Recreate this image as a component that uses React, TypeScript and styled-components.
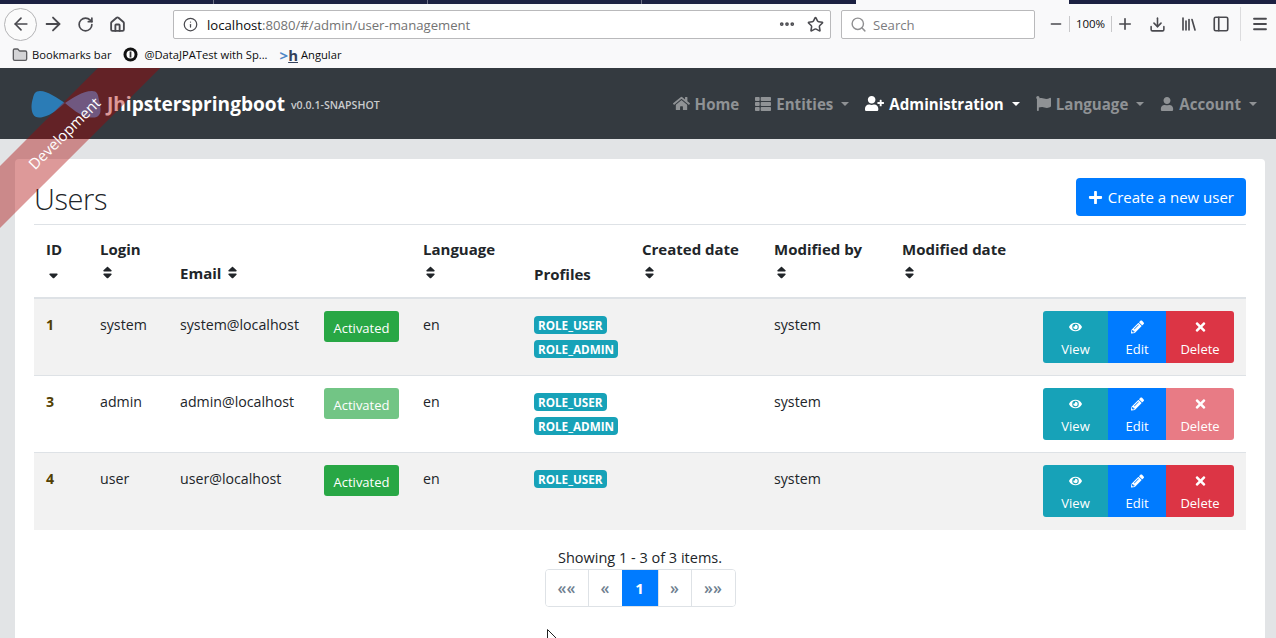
import React from "react"
import styled, { createGlobalStyle } from "styled-components"
import { FaEye, FaFlag, FaHome, FaPencilAlt, FaPlus, FaSort, FaSortDown, FaThList, FaTimes, FaUser, FaUserPlus } from "react-icons/fa"
import { ArrowLeft, ArrowRight, Download, Ellipsis, Folder, Home, Info, Library, Menu, Minus, PanelLeft, Plus, RotateCw, Search, Star } from "lucide-react"

const FONT = `"Open Sans", "Noto Sans", "Liberation Sans", sans-serif`

const GlobalStyle = createGlobalStyle`
  html, body {
    margin: 0;
    height: 638px;
    overflow: hidden;
    font-family: ${FONT};
    font-size: 14px;
    color: #212529;
    background: #e2e4e6;
  }
  * { box-sizing: border-box; }
`

const SPage = styled.div`
  position: relative;
  width: 1276px;
  height: 638px;
  overflow: hidden;
`

/* browser chrome */
const SChrome = styled.div`
  background: #f9f9fa;
  height: 68px;
`

const STabStrip = styled.div`
  display: grid;
  grid-template-columns: 214px 214px 214px 214px 213px 1fr;
  height: 4px;
`

const STab = styled.div<{ $active?: boolean; $last?: boolean }>`
  background: ${({ $active }) => ($active ? "#f9f9fa" : "#1c2142")};
  border-right: ${({ $active, $last }) => ($active || $last ? "none" : "1px solid #6d7085")};
`

const SToolbar = styled.div`
  display: flex;
  align-items: center;
  height: 40px;
  padding-left: 4px;
  color: #4a4a4f;
`

const SBackButton = styled.div`
  display: flex;
  align-items: center;
  justify-content: center;
  flex: none;
  width: 33px;
  height: 33px;
  border: 1px solid #b4b4b6;
  border-radius: 50%;
  background: #fbfbfb;
`

const SToolButton = styled.div<{ $width?: number }>`
  display: flex;
  align-items: center;
  justify-content: center;
  flex: none;
  width: ${({ $width }) => $width || 32}px;
`

const SDownloadButton = styled(SToolButton)`
  margin-left: 3px;
`

const SUrlBar = styled.div`
  display: flex;
  align-items: center;
  flex: none;
  width: 658px;
  height: 29px;
  margin-left: 40px;
  padding: 0 6px 0 9px;
  background: #fff;
  border: 1px solid #b9b9bb;
  border-radius: 2px;
  font-size: 13.15px;
`

const SUrlText = styled.div`
  flex: 1;
  margin-left: 9px;
  padding-top: 1px;
  color: #737373;
`

const SUrlHost = styled.span`
  color: #0c0c0d;
`

const SUrlActions = styled.div`
  display: flex;
  align-items: center;
  gap: 11px;
`

const SSearchBar = styled.div`
  display: flex;
  align-items: center;
  gap: 6px;
  flex: none;
  width: 194px;
  height: 29px;
  margin-left: 10px;
  padding-left: 8px;
  background: #fff;
  border: 1px solid #b9b9bb;
  border-radius: 2px;
  color: #7c7c80;
  font-size: 13.15px;
`

const SSearchLabel = styled.span`
  padding-top: 1px;
`

const SZoomOut = styled(SToolButton)`
  width: 28px;
  margin-left: 7px;
  height: 16px;
  border-right: 1px solid #c8c8ca;
`

const SZoomLabel = styled.div`
  flex: none;
  width: 42px;
  height: 16px;
  border-right: 1px solid #c8c8ca;
  text-align: center;
  font-size: 11.5px;
  line-height: 16px;
  color: #0c0c0d;
`

const SDivider = styled.div`
  flex: none;
  width: 1px;
  height: 34px;
  margin: 0 3px;
  background: #dcdcde;
`

const SBookmarks = styled.div`
  display: flex;
  align-items: center;
  height: 24px;
  padding: 0 0 3px 12px;
  font-size: 11.2px;
  color: #0c0c0d;
`

const SBookmark = styled.div<{ $gap: number }>`
  display: flex;
  align-items: center;
  gap: ${({ $gap }) => $gap}px;
  margin-right: 12px;
`

const SHBadge = styled.span`
  font-weight: 700;
  font-size: 15px;
  line-height: 16px;
  color: #4f86c6;
`

const SHLetter = styled.span`
  color: #33415c;
  text-decoration: underline;
`

/* app navbar */
const SNavbar = styled.nav`
  display: flex;
  align-items: center;
  justify-content: space-between;
  height: 71px;
  padding: 0 19px 0 30px;
  background: #343a40;
`

const SBrand = styled.div`
  display: flex;
  align-items: center;
`

const SBrandName = styled.span`
  margin-left: 5px;
  font-size: 19.1px;
  font-weight: 700;
  color: #fff;
`

const SBrandVersion = styled.span`
  margin: 3px 0 0 6px;
  font-size: 10.6px;
  font-weight: 600;
  color: #c9cbcd;
`

const SNavList = styled.div`
  display: flex;
  align-items: center;
  gap: 16px;
`

const SNavItem = styled.div<{ $active?: boolean }>`
  display: flex;
  align-items: center;
  gap: 5px;
  font-size: 15.1px;
  font-weight: 700;
  color: ${({ $active }) => ($active ? "#fff" : "#8f9295")};
`

const SCaret = styled.span`
  width: 0;
  height: 0;
  margin-left: 3px;
  border-top: 4px solid currentColor;
  border-left: 4px solid transparent;
  border-right: 4px solid transparent;
`

/* ribbon over the corner */
const SRibbonClip = styled.div`
  position: absolute;
  top: 68px;
  left: 0;
  width: 240px;
  height: 240px;
  overflow: hidden;
  pointer-events: none;
`

const SRibbon = styled.div`
  position: absolute;
  top: 43px;
  left: -86px;
  width: 300px;
  height: 44px;
  background: rgba(170, 0, 0, 0.4);
  color: #fff;
  font-size: 15px;
  line-height: 44px;
  text-align: center;
  transform: rotate(-45deg);
`

/* users card */
const SMain = styled.main`
  padding: 20px 11px 0 15px;
`

const SCard = styled.div`
  height: 479px;
  padding: 19px 19px 0;
  background: #fff;
  border-radius: 4px 4px 0 0;
`

const SCardHeader = styled.div`
  display: flex;
  align-items: flex-start;
  justify-content: space-between;
  height: 47px;
  padding-bottom: 8px;
  border-bottom: 1px solid #dee2e6;
`

const SHeading = styled.h2`
  margin: 0;
  font-size: 29px;
  font-weight: 300;
  letter-spacing: -0.4px;
  line-height: 42px;
`

const SCreateButton = styled.button`
  display: flex;
  align-items: center;
  gap: 5px;
  height: 38px;
  padding: 0 12px;
  background: #007bff;
  color: #fff;
  border: 0;
  border-radius: 4px;
  font-family: inherit;
  font-size: 15px;
`

const STable = styled.table`
  width: 100%;
  table-layout: fixed;
  border-collapse: collapse;
`

const STh = styled.th`
  padding: 12px 12px 11px;
  border-bottom: 2px solid #dee2e6;
  vertical-align: bottom;
  text-align: left;
  font-size: 15px;
  font-weight: 700;
  line-height: 24px;
`

const SHeadLine = styled.span`
  display: block;
  white-space: nowrap;
`

const SSort = styled.span`
  font-size: 15px;
  vertical-align: -1px;
`

const STr = styled.tr<{ $striped?: boolean }>`
  background: ${({ $striped }) => ($striped ? "#f2f2f2" : "#fff")};
`

const STd = styled.td`
  padding: 12px;
  height: 77px;
  border-top: 1px solid #dee2e6;
  vertical-align: top;
  font-size: 14.2px;
  line-height: 28px;
  white-space: nowrap;
`

const SIdLink = styled.span`
  font-weight: 700;
  color: #533f03;
`

const SStatus = styled.div<{ $faded?: boolean }>`
  display: block;
  width: 75px;
  height: 31px;
  background: #28a745;
  border-radius: 3px;
  color: #fff;
  font-size: 13px;
  line-height: 35px;
  text-align: center;
  opacity: ${({ $faded }) => ($faded ? 0.65 : 1)};
`

const SProfiles = styled.div`
  display: flex;
  flex-direction: column;
  align-items: flex-start;
  gap: 6px;
  padding-top: 5px;
`

const SBadge = styled.span`
  padding: 0 4px;
  height: 18px;
  background: #17a2b8;
  border-radius: 4px;
  color: #fff;
  font-size: 11.7px;
  font-weight: 700;
  line-height: 18px;
`

const SActions = styled.div`
  display: flex;
  justify-content: flex-end;
`

const SActionButton = styled.div<{ $width: number; $bg: string; $faded?: boolean; $pos?: "first" | "last" }>`
  display: flex;
  flex: none;
  flex-direction: column;
  align-items: center;
  width: ${({ $width }) => $width}px;
  height: 52px;
  padding-top: 9px;
  background: ${({ $bg }) => $bg};
  color: #fff;
  font-size: 13px;
  line-height: 20px;
  opacity: ${({ $faded }) => ($faded ? 0.65 : 1)};
  border-radius: ${({ $pos }) => ($pos === "first" ? "3px 0 0 3px" : $pos === "last" ? "0 3px 3px 0" : "0")};
  svg {
    flex: none;
    height: 14px;
    margin-bottom: 5px;
  }
`

const SFooter = styled.div`
  display: flex;
  flex-direction: column;
  align-items: center;
  padding-top: 18px;
  font-size: 14.5px;
`

const SShowing = styled.div`
  line-height: 20px;
  margin-bottom: 1px;
`

const SPagination = styled.div`
  display: flex;
  height: 38px;
  border: 1px solid #dee2e6;
  border-radius: 4px;
  overflow: hidden;
`

const SPageItem = styled.div<{ $width: number; $active?: boolean }>`
  display: flex;
  align-items: center;
  justify-content: center;
  width: ${({ $width }) => $width}px;
  margin: ${({ $active }) => ($active ? "-1px 0" : "0")};
  background: ${({ $active }) => ($active ? "#007bff" : "#fff")};
  color: ${({ $active }) => ($active ? "#fff" : "#6f7f90")};
  font-size: ${({ $active }) => ($active ? "15px" : "16px")};
  font-weight: ${({ $active }) => ($active ? 700 : 600)};
  border-left: ${({ $active }) => ($active ? "none" : "1px solid #dee2e6")};
  &:first-child {
    border-left: none;
  }
`

const SCursor = styled.svg`
  position: absolute;
  top: 629px;
  left: 547px;
`

const users = [
  { id: 1, login: "system", email: "system@localhost", roles: ["ROLE_USER", "ROLE_ADMIN"], self: false },
  { id: 3, login: "admin", email: "admin@localhost", roles: ["ROLE_USER", "ROLE_ADMIN"], self: true },
  { id: 4, login: "user", email: "user@localhost", roles: ["ROLE_USER"], self: false },
]

const stacked = ["Login", "Language", "Created date", "Modified by", "Modified date"]

const BrowserChrome = () => (
  <SChrome>
    <STabStrip>
      <STab />
      <STab />
      <STab />
      <STab $last />
      <STab $active />
      <STab $last />
    </STabStrip>
    <SToolbar>
      <SBackButton><ArrowLeft size={20} /></SBackButton>
      <SToolButton><ArrowRight size={22} /></SToolButton>
      <SToolButton><RotateCw size={17} strokeWidth={2.4} /></SToolButton>
      <SToolButton><Home size={17} strokeWidth={2.6} /></SToolButton>
      <SUrlBar>
        <Info size={15} />
        <SUrlText><SUrlHost>localhost</SUrlHost>:8080/#/admin/user-management</SUrlText>
        <SUrlActions>
          <Ellipsis size={18} strokeWidth={3} />
          <Star size={17} strokeWidth={2.2} />
        </SUrlActions>
      </SUrlBar>
      <SSearchBar>
        <Search size={17} color="#8f8f91" />
        <SSearchLabel>Search</SSearchLabel>
      </SSearchBar>
      <SZoomOut><Minus size={16} strokeWidth={2.2} /></SZoomOut>
      <SZoomLabel>100%</SZoomLabel>
      <SToolButton $width={26}><Plus size={18} strokeWidth={2.2} /></SToolButton>
      <SDownloadButton><Download size={17} strokeWidth={2.2} /></SDownloadButton>
      <SToolButton><Library size={18} strokeWidth={2.2} /></SToolButton>
      <SToolButton><PanelLeft size={18} strokeWidth={2.2} /></SToolButton>
      <SDivider />
      <SToolButton><Menu size={18} strokeWidth={2.4} /></SToolButton>
    </SToolbar>
    <SBookmarks>
      <SBookmark $gap={4}><Folder size={16} fill="#d4d4d6" color="#5c5c5f" />Bookmarks bar</SBookmark>
      <SBookmark $gap={6}>
        <svg width="15" height="15" viewBox="0 0 15 15">
          <circle cx="7.5" cy="7.5" r="7" fill="#111" />
          <circle cx="7.5" cy="7.5" r="4" fill="#fff" />
          <rect x="6.6" y="4.5" width="1.8" height="6" fill="#333" />
        </svg>
        @DataJPATest with Sp...
      </SBookmark>
      <SBookmark $gap={3}><SHBadge>&gt;<SHLetter>h</SHLetter></SHBadge>Angular</SBookmark>
    </SBookmarks>
  </SChrome>
)

const Navbar = () => (
  <SNavbar>
    <SBrand>
      <svg width="72" height="32" viewBox="0 0 72 32">
        <path d="M35 15C43 10 52 3 62 3C67 3 68 6 69 12C71 20 71 25 69 27C67 30 63 30 58 29C49 27 41 20 35 15Z" fill="#4a93d6" />
        <path d="M35 15C27 10 18 3 10 3C5 3 4 6 3 10C1 16 1 22 3 26C5 30 9 30 13 29C22 27 29 20 35 15Z" fill="#2b7cb6" />
      </svg>
      <SBrandName>Jhipsterspringboot</SBrandName>
      <SBrandVersion>v0.0.1-SNAPSHOT</SBrandVersion>
    </SBrand>
    <SNavList>
      <SNavItem><FaHome size={17} />Home</SNavItem>
      <SNavItem><FaThList size={16} />Entities<SCaret /></SNavItem>
      <SNavItem $active><FaUserPlus size={19} />Administration<SCaret /></SNavItem>
      <SNavItem><FaFlag size={15} />Language<SCaret /></SNavItem>
      <SNavItem><FaUser size={14} />Account<SCaret /></SNavItem>
    </SNavList>
  </SNavbar>
)

const HeadCell = ({ label }: { label: string }) => (
  <STh>
    {stacked.includes(label) ? <SHeadLine>{label}</SHeadLine> : label + " "}
    {label !== "Profiles" && <SSort><FaSort /></SSort>}
  </STh>
)

const UserRow = ({ user, striped }: { user: (typeof users)[number]; striped: boolean }) => (
  <STr $striped={striped}>
    <STd><SIdLink>{user.id}</SIdLink></STd>
    <STd>{user.login}</STd>
    <STd>{user.email}</STd>
    <STd><SStatus $faded={user.self}>Activated</SStatus></STd>
    <STd>en</STd>
    <STd>
      <SProfiles>
        {user.roles.map((role) => <SBadge key={role}>{role}</SBadge>)}
      </SProfiles>
    </STd>
    <STd></STd>
    <STd>system</STd>
    <STd></STd>
    <STd>
      <SActions>
        <SActionButton $width={65} $bg="#17a2b8" $pos="first"><FaEye />View</SActionButton>
        <SActionButton $width={58} $bg="#007bff"><FaPencilAlt />Edit</SActionButton>
        <SActionButton $width={68} $bg="#dc3545" $pos="last" $faded={user.self}><FaTimes />Delete</SActionButton>
      </SActions>
    </STd>
  </STr>
)

const widths = [54, 80, 144, 99, 111, 108, 132, 128, 129, 227]

const App = () => (
  <SPage>
    <GlobalStyle />
    <BrowserChrome />
    <Navbar />
    <SMain>
      <SCard>
        <SCardHeader>
          <SHeading>Users</SHeading>
          <SCreateButton><FaPlus size={15} />Create a new user</SCreateButton>
        </SCardHeader>
        <STable>
          <colgroup>
            {widths.map((w, i) => <col key={i} width={w} />)}
          </colgroup>
          <thead>
            <tr>
              <STh><SHeadLine>ID</SHeadLine><SSort><FaSortDown /></SSort></STh>
              <HeadCell label="Login" />
              <HeadCell label="Email" />
              <STh></STh>
              <HeadCell label="Language" />
              <HeadCell label="Profiles" />
              <HeadCell label="Created date" />
              <HeadCell label="Modified by" />
              <HeadCell label="Modified date" />
              <STh></STh>
            </tr>
          </thead>
          <tbody>
            {users.map((user, i) => <UserRow key={user.id} user={user} striped={i % 2 === 0} />)}
          </tbody>
        </STable>
        <SFooter>
          <SShowing>Showing 1 - 3 of 3 items.</SShowing>
          <SPagination>
            <SPageItem $width={42}>««</SPageItem>
            <SPageItem $width={34}>«</SPageItem>
            <SPageItem $width={36} $active>1</SPageItem>
            <SPageItem $width={33}>»</SPageItem>
            <SPageItem $width={44}>»»</SPageItem>
          </SPagination>
        </SFooter>
      </SCard>
    </SMain>
    <SRibbonClip><SRibbon>Development</SRibbon></SRibbonClip>
    <SCursor width="10" height="10" viewBox="0 0 10 10">
      <path d="M0.5 0.5V9.5M0.5 0.5L9 9" stroke="#222" fill="none" />
    </SCursor>
  </SPage>
)

export default App
